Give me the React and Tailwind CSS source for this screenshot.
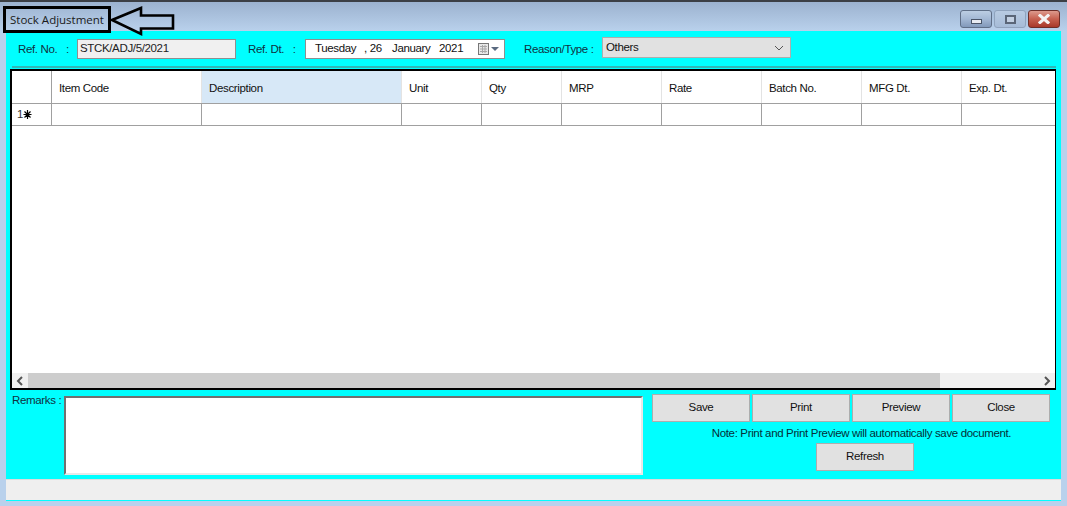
import React from "react";

const font = "font-['Liberation_Sans',Arial,sans-serif]";

const cols = [
  { w: "w-[40px]", t: "" },
  { w: "w-[150px]", t: "Item Code" },
  { w: "w-[200px]", t: "Description", active: true },
  { w: "w-[80px]", t: "Unit" },
  { w: "w-[80px]", t: "Qty" },
  { w: "w-[100px]", t: "MRP" },
  { w: "w-[100px]", t: "Rate" },
  { w: "w-[100px]", t: "Batch No." },
  { w: "w-[100px]", t: "MFG Dt." },
  { w: "flex-1", t: "Exp. Dt." },
];

function Btn({ children, cls = "" }) {
  return (
    <button className={`w-[98px] h-[28px] flex items-center justify-center bg-[#e1e1e1] border border-[#adadad] text-[#111] ${cls}`}>
      {children}
    </button>
  );
}

function WinBtn({ kind }) {
  const red = kind === "close";
  return (
    <div className={`w-[32px] h-[18px] rounded-[3px] border flex items-center justify-center ${red ? "border-[#6e2e28] bg-gradient-to-b from-[#dc9a8d] via-[#c6604f] to-[#a8382a]" : kind === "max" ? "border-[#8fa3bd] bg-gradient-to-b from-[#b8cbe2] to-[#a6bcd8]" : "border-[#5f6f87] bg-gradient-to-b from-[#bccee3] via-[#a3b8d4] to-[#8299ba]"}`}>
      {kind === "min" && <div className="w-[11px] h-[5px] bg-[#e8ecf2] border border-[#4a5568] mt-[4px]" />}
      {kind === "max" && <div className="w-[11px] h-[9px] border-2 border-[#5a6678] bg-[#c2d0e2]" />}
      {red && (
        <svg width="12" height="10" viewBox="0 0 12 10">
          <path d="M2 1.5 L10 8.5 M10 1.5 L2 8.5" stroke="#f4f4f4" strokeWidth="3" strokeLinecap="square" />
        </svg>
      )}
    </div>
  );
}

export default function App() {
  return (
    <div className={`${font} relative w-[1067px] h-[506px] overflow-hidden bg-[#b9d1ec] border-t-2 border-[#3c3f45] text-[11.5px] tracking-[-0.35px] text-[#111] flex flex-col`}>
      {/* title bar */}
      <div className="h-[29px] shrink-0 bg-gradient-to-b from-[#9cb2cf] to-[#b9d1ec] flex items-start justify-end pl-[5px] pr-[7px] pt-[8px]">
        <div className="flex gap-[2px]">
          <WinBtn kind="min" />
          <WinBtn kind="max" />
          <WinBtn kind="close" />
        </div>
      </div>

      {/* annotation over the title bar */}
      <div className="absolute left-[3px] top-[4px] w-[108px] h-[27px] border-[3px] border-black flex items-center pl-[4px] z-10 font-['Open_Sans',sans-serif] text-[11.5px] tracking-normal text-[#1a1a1a]">
        Stock Adjustment
      </div>
      <svg className="absolute left-[109px] top-[3px] z-10" width="68" height="32" viewBox="0 0 68 32">
        <path d="M3 15 L32 3 L32 10.5 L64 10.5 L64 23.5 L32 23.5 L32 29 Z" fill="none" stroke="#000" strokeWidth="2.6" />
      </svg>

      {/* client */}
      <div className="mx-[6px] w-[1055px] h-[470px] shrink-0 bg-[#00ffff] flex flex-col border-b border-[#00ffff]">
        {/* fields row */}
        <div className="h-[35px] shrink-0 flex items-start pt-[8px]">
          <span className="ml-[12px] w-[59px] pt-[3px] text-[#103040] leading-[14px] whitespace-nowrap">Ref. No.&nbsp;&nbsp;&nbsp;:</span>
          <div className="w-[159px] h-[20px] border border-[#8f8f8f] bg-[#f0f0f0] pl-[2px] pb-[1px] flex items-center text-[#222]">STCK/ADJ/5/2021</div>
          <span className="ml-[12px] w-[57px] pt-[3px] text-[#103040] leading-[14px] whitespace-nowrap">Ref. Dt.&nbsp;&nbsp;&nbsp;:</span>
          <div className="w-[200px] h-[20px] border border-[#8f8f8f] bg-white flex items-center pl-[9px] pb-[1px]">
            <span className="w-[49px]">Tuesday</span>
            <span className="w-[28px]">, 26</span>
            <span className="w-[47px]">January</span>
            <span className="w-[39px]">2021</span>
            <svg width="22" height="12" viewBox="0 0 22 12">
              <rect x="0.5" y="0.5" width="10" height="11" fill="#e8e8e8" stroke="#777" />
              <path d="M2 3.5 H9 M2 6 H9 M2 8.5 H9 M4.5 2 V10 M7 2 V10" stroke="#a8a8a8" strokeWidth="1" />
              <path d="M13 4 H21 L17 8 Z" fill="#5a6a80" />
            </svg>
          </div>
          <span className="ml-[19px] w-[78px] pt-[3px] text-[#103040] leading-[14px] whitespace-nowrap">Reason/Type :</span>
          <div className="-mt-[2px] w-[189px] h-[21px] border border-[#adadad] bg-[#e1e1e1] flex items-center justify-between pl-[3px] pr-[6px] pt-[1px] text-[#111]">
            <span>Others</span>
            <svg width="10" height="6" viewBox="0 0 10 6">
              <path d="M1 1 L5 5 L9 1" fill="none" stroke="#555" strokeWidth="1" />
            </svg>
          </div>
        </div>

        {/* separator */}
        <div className="ml-[6px] w-[1044px] h-[2px] shrink-0 bg-[#2fb8b8]" />

        {/* grid */}
        <div className="ml-[4px] mt-[1px] w-[1046px] h-[321px] shrink-0 border-2 border-black border-r-[1px] border-t-[2px] bg-white flex flex-col">
          <div className="flex h-[33px] shrink-0 border-b border-[#a0a0a0]">
            {cols.map((c, i) => (
              <div
                key={i}
                className={`${c.w} h-full pl-[7px] pt-[3px] flex items-center ${i < cols.length - 1 ? "border-r" : ""} ${i === 0 ? "border-[#a0a0a0]" : "border-[#e3e3e3]"} ${c.active ? "bg-[#d7e8f7]" : ""}`}
              >
                {c.t}
              </div>
            ))}
          </div>
          <div className="flex h-[22px] shrink-0 border-b border-[#a0a0a0]">
            {cols.map((c, i) => (
              <div key={i} className={`${c.w} h-full flex items-center ${i < cols.length - 1 ? "border-r border-[#a0a0a0]" : ""}`}>
                {i === 0 && (
                  <>
                    <span className="ml-[5px] w-[5px] text-[#333]">1</span>
                    <svg width="11" height="11" viewBox="0 0 11 11">
                      <path d="M5.5 1 V10 M1.5 5.5 H9.5 M2.5 2.5 L8.5 8.5 M8.5 2.5 L2.5 8.5" stroke="#000" strokeWidth="1.2" />
                    </svg>
                  </>
                )}
              </div>
            ))}
          </div>
          <div className="flex-1" />
          {/* scrollbar */}
          <div className="h-[15px] shrink-0 flex bg-[#f0f0f0] items-stretch">
            <div className="w-[16px] flex items-center justify-center">
              <svg width="8" height="10" viewBox="0 0 8 10">
                <path d="M6 1 L2 5 L6 9" fill="none" stroke="#555" strokeWidth="2" />
              </svg>
            </div>
            <div className="w-[912px] bg-[#cdcdcd]" />
            <div className="flex-1 flex items-center justify-end pr-[4px]">
              <svg width="8" height="10" viewBox="0 0 8 10">
                <path d="M2 1 L6 5 L2 9" fill="none" stroke="#555" strokeWidth="2" />
              </svg>
            </div>
          </div>
        </div>

        {/* bottom */}
        <div className="flex-1 flex items-start">
          <span className="ml-[6px] mt-[3px] w-[52px] leading-[14px] text-[#103040] whitespace-nowrap">Remarks :</span>
          <div className="mt-[6px] w-[579px] h-[79px] bg-white border-2 border-t-[#707070] border-l-[#707070] border-r-[#e8e8e8] border-b-[#e8e8e8]" />
          <div className="ml-[9px] mt-[4px] flex flex-col items-center w-[398px]">
            <div className="flex gap-[2px]">
              <Btn>Save</Btn>
              <Btn>Print</Btn>
              <Btn>Preview</Btn>
              <Btn>Close</Btn>
            </div>
            <div className="mt-[3px] h-[16px] leading-[16px] text-[#053038] ml-[21px] whitespace-nowrap">Note: Print and Print Preview will automatically save document.</div>
            <Btn cls="mt-[2px] ml-[28px]">Refresh</Btn>
          </div>
        </div>

        <div className="h-[21px] shrink-0 bg-[#efefef] border-t border-[#dcdcdc]" />
      </div>
    </div>
  );
}
